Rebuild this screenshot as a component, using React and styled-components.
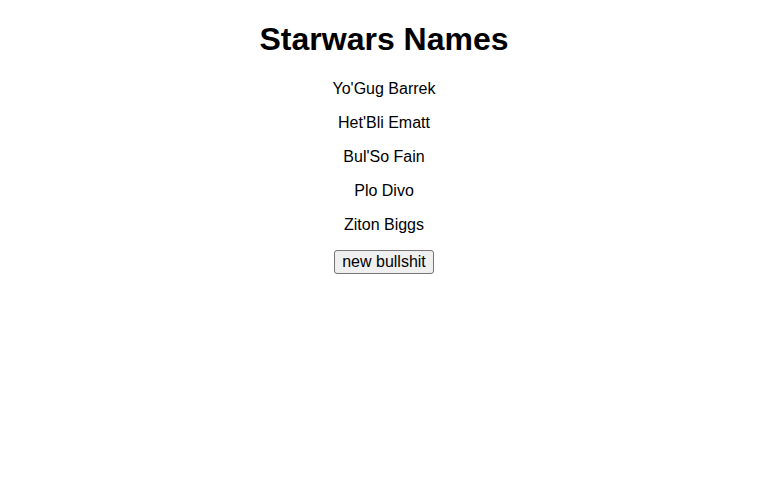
import { useState } from 'react'
import styled, { createGlobalStyle } from 'styled-components'

const GlobalStyle = createGlobalStyle`
  body {
    margin: 0;
    font-family: "Liberation Sans", Arial, sans-serif;
    background: #fff;
    color: #000;
  }
`

const Page = styled.div`
  text-align: center;
  padding: 0 8px;
`

const Title = styled.h1`
  font-size: 32px;
  font-weight: bold;
  margin: 21.44px 0;
`

const Name = styled.p`
  font-size: 16px;
  margin: 16px 0;
`

const NewButton = styled.button`
  font-family: "Liberation Sans", Arial, sans-serif;
  font-size: 16px;
  color: #000;
  background: #efefef;
  border: 1px solid #767676;
  border-radius: 3px;
  padding: 2px 7px;
  cursor: pointer;
`

const firsts = ["Yo'Gug", "Het'Bli", "Bul'So", 'Plo', 'Ziton', "Dar'Vek", "Kel'Tor"]
const lasts = ['Barrek', 'Ematt', 'Fain', 'Divo', 'Biggs', 'Oola', 'Rexx']

const initial = ["Yo'Gug Barrek", "Het'Bli Ematt", "Bul'So Fain", 'Plo Divo', 'Ziton Biggs']

function randomName() {
  const f = firsts[Math.floor(Math.random() * firsts.length)]
  const l = lasts[Math.floor(Math.random() * lasts.length)]
  return `${f} ${l}`
}

export default function App() {
  const [names, setNames] = useState(initial)

  return (
    <Page>
      <GlobalStyle />
      <Title>Starwars Names</Title>
      {names.map((name, i) => (
        <Name key={i}>{name}</Name>
      ))}
      <NewButton onClick={() => setNames(names.map(() => randomName()))}>
        new bullshit
      </NewButton>
    </Page>
  )
}
